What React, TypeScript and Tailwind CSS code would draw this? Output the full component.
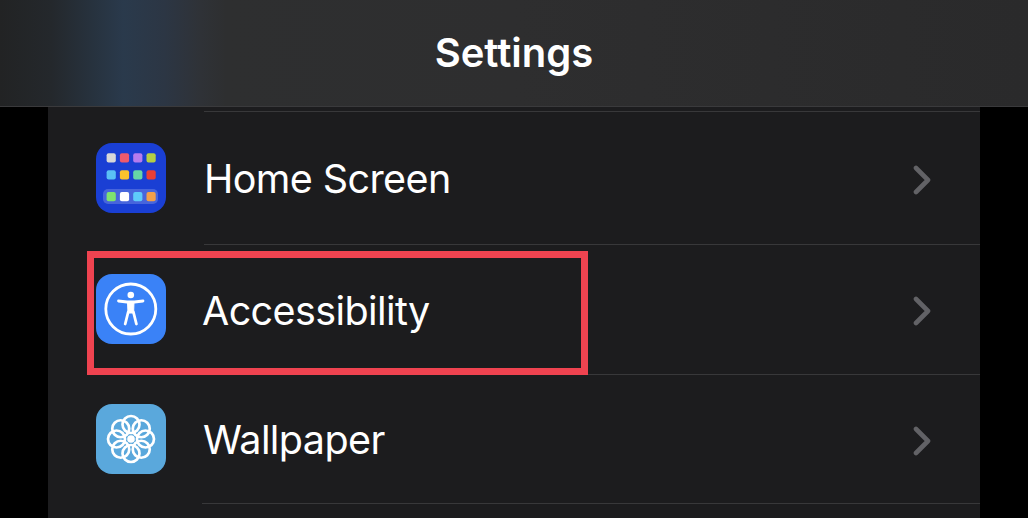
import type { ReactNode } from "react";

function HomeScreenIcon() {
  const top = ["#d8d8d8", "#ee5a6c", "#b57bee", "#b5cf45", "#5ac0f5", "#f9c22e", "#66d6a6", "#ea3f35"];
  const dock = ["#7fe36f", "#ffffff", "#5ecbfa", "#f2a04a"];
  return (
    <svg width="70" height="70" viewBox="0 0 70 70">
      <rect width="70" height="70" rx="16" fill="#1a3fd4" />
      {top.map((c, i) => (
        <rect key={c} x={10.6 + (i % 4) * 13.3} y={10.2 + Math.floor(i / 4) * 17} width="9.2" height="9.2" rx="2" fill={c} />
      ))}
      <rect x="7" y="46" width="55" height="15" rx="5" fill="#ffffff" fillOpacity="0.2" />
      {dock.map((c, i) => (
        <rect key={c} x={10.6 + i * 13.3} y="49" width="9.2" height="9.2" rx="2" fill={c} />
      ))}
    </svg>
  );
}

function AccessibilityIcon() {
  return (
    <svg width="70" height="70" viewBox="0 0 70 70">
      <rect width="70" height="70" rx="16" fill="#3a82f7" />
      <circle cx="34.8" cy="35" r="25" fill="none" stroke="#fff" strokeWidth="2.8" />
      <circle cx="34.8" cy="21" r="3.3" fill="#fff" />
      <path d="M22.5 27 L31 28 H38.5 L47 27" fill="none" stroke="#fff" strokeWidth="2.8" strokeLinecap="round" strokeLinejoin="round" />
      <path d="M31.5 28 H38 L37.6 39 H32 Z" fill="#fff" stroke="#fff" strokeWidth="1" strokeLinejoin="round" />
      <path d="M32.2 38 L29.2 50 M37.4 38 L40.4 50" fill="none" stroke="#fff" strokeWidth="2.8" strokeLinecap="round" />
    </svg>
  );
}

function WallpaperIcon() {
  const angles = [0, 45, 90, 135, 180, 225, 270, 315];
  return (
    <svg width="70" height="70" viewBox="0 0 70 70">
      <rect width="70" height="70" rx="16" fill="#5aa8dc" />
      <g fill="none" stroke="#fff" strokeWidth="2.7" transform="translate(35 35)">
        {angles.map((a) => (
          <circle key={a} transform={`rotate(${a})`} cx="0" cy="-14.5" r="8.5" />
        ))}
      </g>
      <circle cx="35" cy="35" r="3.8" fill="#fff" />
    </svg>
  );
}

function Chevron() {
  return (
    <svg width="18" height="30" viewBox="0 0 18 30" className="mt-[3px] shrink-0">
      <path d="M3 3 L15 15 L3 27" fill="none" stroke="#626266" strokeWidth="4.6" strokeLinecap="round" strokeLinejoin="round" />
    </svg>
  );
}

function Row({ icon, label, textOffset, height, lineInset }: { icon: ReactNode; label: string; textOffset: string; height: string; lineInset: string }) {
  return (
    <div className={`flex flex-col ${height}`}>
      <div className="flex grow items-center pr-[49px] pl-12">
        <div className="shrink-0">{icon}</div>
        <span className={`grow pt-1 text-[39.5px] leading-none tracking-[-0.6px] text-white ${textOffset}`}>{label}</span>
        <Chevron />
      </div>
      <div className={`h-px bg-[#38383a] ${lineInset}`} />
    </div>
  );
}

export default function App() {
  return (
    <div className="relative h-[518px] w-[1028px] overflow-hidden bg-black font-['Inter',sans-serif]">
      <header className="flex h-[107px] items-center justify-center border-b border-[#3a3a3c] bg-[linear-gradient(90deg,#222324_0%,#24282c_5%,#27323e_9%,#2a3a4c_12%,#2c3644_16%,#2f3237_19.5%,#2e2f30_22%,#2e2e2f_50%,#2a2a2b_100%)]">
        <h1 className="text-[40px] leading-none font-semibold text-white">Settings</h1>
      </header>

      <main className="mx-12 h-[411px] bg-[#1c1c1e]">
        <div className="ml-[156px] h-[5px] border-b border-[#38383a]" />
        <Row icon={<HomeScreenIcon />} label="Home Screen" textOffset="ml-[38px]" height="h-[133px]" lineInset="ml-[156px]" />
        <Row
          icon={
            <div className="-mt-0.5">
              <AccessibilityIcon />
            </div>
          }
          label="Accessibility"
          textOffset="ml-[36px]"
          height="h-[130px]"
          lineInset="ml-[154px]"
        />
        <Row icon={<WallpaperIcon />} label="Wallpaper" textOffset="ml-[37px]" height="h-[129px]" lineInset="ml-[154px]" />
      </main>

      {/* highlight box */}
      <div className="absolute top-[251px] left-[87px] h-[124px] w-[501px] border-[7px] border-[#ef4350]" />
    </div>
  );
}
